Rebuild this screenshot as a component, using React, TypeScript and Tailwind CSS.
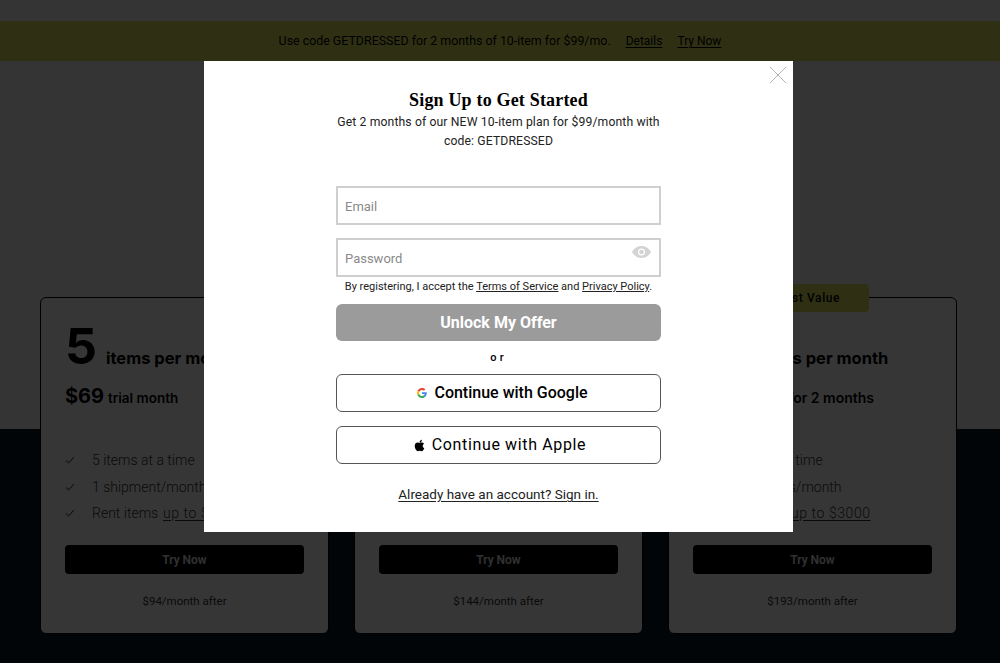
import { FaApple } from 'react-icons/fa';

interface Plan {
  count: string;
  price: string;
  priceNote: string;
  lines: string[];
  limit: string;
  after: string;
  featured?: boolean;
}

const plans: Plan[] = [
  { count: '5', price: '$69', priceNote: 'trial month', lines: ['5 items at a time', '1 shipment/month'], limit: 'up to $1500', after: '$94/month after' },
  { count: '7', price: '$89', priceNote: 'trial month', lines: ['7 items at a time', '2 shipments/month'], limit: 'up to $2000', after: '$144/month after' },
  { count: '10', price: '$99', priceNote: '/month for 2 months', lines: ['5 items at a time', '2 shipments/month'], limit: 'up to $3000', after: '$193/month after', featured: true },
];

function Check() {
  return (
    <svg className="w-[10px] h-[10px] shrink-0" viewBox="0 0 10 10" fill="none" stroke="#222" strokeWidth={1}>
      <path d="M1 5.5 3.6 8 9 2" />
    </svg>
  );
}

function PlanCard({ plan }: { plan: Plan }) {
  return (
    <div className="relative h-[337px] rounded-md border border-black bg-white px-[24px] pt-[23px] text-black">
      {plan.featured && (
        <div className="absolute -top-[14px] right-[87px] flex h-[28px] w-[127px] items-center justify-center rounded-sm bg-[#dbe45a] pl-[6px] text-[12px] font-medium tracking-[0.05em]">
          Best Value
        </div>
      )}
      <div className="flex h-[50px] items-end font-['Inter',sans-serif]">
        <span className="text-[50px] font-bold leading-[50px]">{plan.count}</span>
        <span className="mb-[1px] ml-[9px] text-[16.5px] font-bold leading-[24px]">items per month</span>
      </div>
      <div className="mt-[12px] flex items-baseline gap-[4px] font-['Inter',sans-serif]">
        <span className="text-[20px] font-bold leading-[26px]">{plan.price}</span>
        <span className={plan.featured ? 'text-[14px] font-semibold leading-[26px]' : 'text-[13.5px] font-semibold leading-[26px]'}>{plan.priceNote}</span>
      </div>
      <ul className="mt-[39px] flex flex-col gap-[6.5px] text-[14px] font-light leading-[20px] text-[#333]">
        {plan.lines.map((line) => (
          <li key={line} className="flex items-center gap-[17px]">
            <Check />
            {line}
          </li>
        ))}
        <li className="flex items-center gap-[17px]">
          <Check />
          <span>
            Rent items <span className="ml-[1.5px] tracking-[0.04em] underline underline-offset-2">{plan.limit}</span>
          </span>
        </li>
      </ul>
      <button className="mt-[22px] h-[29px] w-full rounded-sm bg-black text-[12px] font-semibold text-white/90">Try Now</button>
      <p className="mt-[19px] text-center text-[11.5px] leading-[16px] text-[#333]">{plan.after}</p>
    </div>
  );
}

function GoogleIcon() {
  return (
    <svg className="h-[10px] w-[10px]" viewBox="0 0 48 48">
      <path fill="#EA4335" d="M24 9.5c3.5 0 6.7 1.2 9.2 3.6l6.9-6.9C35.9 2.4 30.5 0 24 0 14.6 0 6.5 5.4 2.6 13.2l8 6.2C12.5 13.6 17.8 9.5 24 9.5z" />
      <path fill="#4285F4" d="M46.9 24.5c0-1.6-.1-3.1-.4-4.5H24v9h12.9c-.6 3-2.2 5.5-4.7 7.2l7.7 6c4.5-4.2 7-10.3 7-17.7z" />
      <path fill="#FBBC05" d="M10.5 28.6c-.5-1.4-.8-3-.8-4.6s.3-3.2.8-4.6l-8-6.2C.9 16.5 0 20.1 0 24s.9 7.5 2.6 10.8l7.9-6.2z" />
      <path fill="#34A853" d="M24 48c6.5 0 11.9-2.1 15.9-5.8l-7.7-6c-2.2 1.5-4.9 2.3-8.2 2.3-6.2 0-11.5-4.2-13.4-9.8l-8 6.2C6.5 42.6 14.6 48 24 48z" />
    </svg>
  );
}

function SignUpModal() {
  return (
    <div className="relative ml-[204px] flex h-[471px] w-[589px] flex-col items-center bg-white pt-[28px] text-black">
      <button className="absolute right-[6px] top-[5px]" aria-label="Close">
        <svg className="h-[18px] w-[18px]" viewBox="0 0 18 18" stroke="#b5b5b5" strokeWidth={1}>
          <path d="M1 1 17 17M17 1 1 17" />
        </svg>
      </button>
      <h2 className="font-['Liberation_Serif',serif] text-[18px] font-bold leading-[22px] tracking-[0.01em]">Sign Up to Get Started</h2>
      <p className="mt-[2px] w-[340px] text-center text-[12.2px] leading-[19px] tracking-[0.01em] text-[#222]">
        Get 2 months of our NEW 10-item plan for $99/month with code: GETDRESSED
      </p>
      <div className="mt-[35px] flex w-[325px] flex-col">
        <div className="flex h-[39px] items-center border-2 border-[#cfcfcf] px-[7px] pt-[2px] text-[13px] text-[#8a8a8a]">Email</div>
        <div className="relative mt-[13px] flex h-[39px] items-center border-2 border-[#cfcfcf] px-[7px] pt-[2px] text-[13px] text-[#8a8a8a]">
          Password
          <svg className="absolute right-[8px] top-[6px] h-[12px] w-[19px]" viewBox="0 0 19 12">
            <path fill="#d4d4d4" d="M9.5 0C5.2 0 1.8 2.6 0 6c1.8 3.4 5.2 6 9.5 6s7.7-2.6 9.5-6c-1.8-3.4-5.2-6-9.5-6z" />
            <circle cx="9.5" cy="6" r="3.5" fill="#fff" />
            <circle cx="9.5" cy="6" r="2.3" fill="#d4d4d4" />
          </svg>
        </div>
        <p className="mt-[2px] text-center text-[11px] leading-[16px] text-[#222]">
          By registering, I accept the <span className="underline">Terms of Service</span> and <span className="underline">Privacy Policy</span>.
        </p>
        <button className="mt-[9px] h-[37px] w-full rounded-md bg-[#9b9b9b] text-[16px] font-bold text-white">Unlock My Offer</button>
        <p className="mt-[9px] text-center text-[11px] font-medium leading-[16px] tracking-[0.3em]">or</p>
        <button className="mt-[8px] flex h-[38px] w-full items-center justify-center gap-[7px] rounded-md border border-[#555] pl-[8px] text-[16px] font-medium">
          <GoogleIcon />
          Continue with Google
        </button>
        <button className="mt-[14px] flex h-[38px] w-full items-center justify-center gap-[6px] rounded-md border border-[#555] pl-[2px] text-[16px] tracking-[0.04em]">
          <FaApple className="h-[13px] w-[13px]" />
          Continue with Apple
        </button>
      </div>
      <a className="mt-[21px] text-[13.5px] leading-[18px] text-[#222] underline underline-offset-2">Already have an account? Sign in.</a>
    </div>
  );
}

export default function App() {
  return (
    <div className="relative flex h-[663px] w-[1000px] flex-col overflow-hidden bg-[#f3f3f3] font-['Roboto',sans-serif]">
      <div className="h-[21px] shrink-0" />
      <div className="flex h-[40px] shrink-0 items-center justify-center gap-[15px] bg-[#dbe45a] text-[12.4px] text-black">
        <span>Use code GETDRESSED for 2 months of 10-item for $99/mo.</span>
        <a className="text-[12px] underline underline-offset-2">Details</a>
        <a className="text-[12px] underline underline-offset-2">Try Now</a>
      </div>
      <div className="h-[368px] shrink-0" />
      <div className="flex-1 bg-[#0a1821] pl-[40px]">
        <div className="-mt-[132px] grid grid-cols-[repeat(3,289px)] gap-[25px]">
          {plans.map((plan) => (
            <PlanCard key={plan.count} plan={plan} />
          ))}
        </div>
      </div>
      {/* dimmed backdrop with the modal on top */}
      <div className="absolute inset-0 bg-black/[0.79] pt-[61px]">
        <SignUpModal />
      </div>
    </div>
  );
}
